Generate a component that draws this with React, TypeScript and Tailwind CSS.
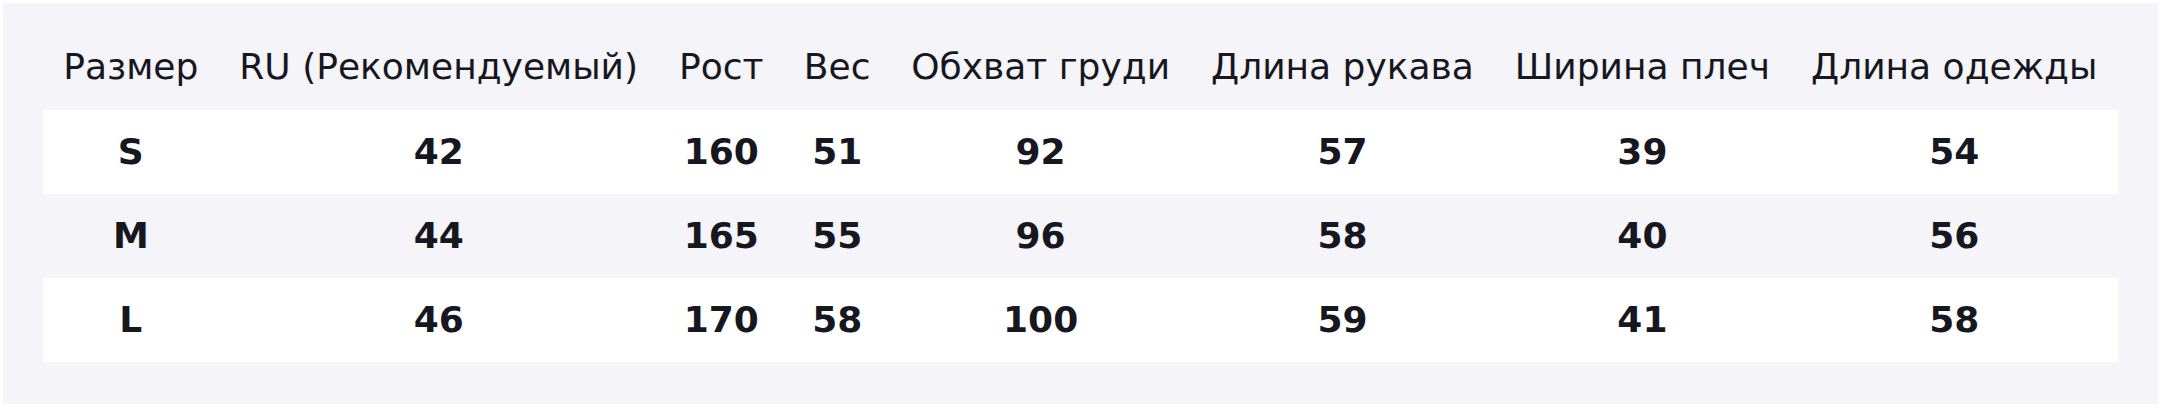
const HEADERS = [
  'Размер',
  'RU (Рекомендуемый)',
  'Рост',
  'Вес',
  'Обхват груди',
  'Длина рукава',
  'Ширина плеч',
  'Длина одежды',
]

const ROWS = [
  ['S', '42', '160', '51', '92', '57', '39', '54'],
  ['M', '44', '165', '55', '96', '58', '40', '56'],
  ['L', '46', '170', '58', '100', '59', '41', '58'],
]

export default function App() {
  return (
    <div className="min-h-screen bg-white p-[3px] font-['DejaVu_Sans',sans-serif] text-[#17171f]">
      <div className="bg-[#f4f4f9] px-10 pt-[37px] pb-[42px]">
        <table className="w-full border-collapse text-[36px] leading-[1.5]">
          <thead>
            <tr>
              {HEADERS.map((h) => (
                <th key={h} className="px-5 pt-0 pb-4 text-center font-normal whitespace-nowrap">
                  {h}
                </th>
              ))}
            </tr>
          </thead>
          <tbody>
            {ROWS.map((row, i) => (
              <tr key={row[0]} className={i % 2 === 0 ? 'bg-white' : 'bg-transparent'}>
                {row.map((cell, j) => (
                  <td key={j} className="px-5 py-[15px] text-center font-bold">
                    {cell}
                  </td>
                ))}
              </tr>
            ))}
          </tbody>
        </table>
      </div>
    </div>
  )
}
